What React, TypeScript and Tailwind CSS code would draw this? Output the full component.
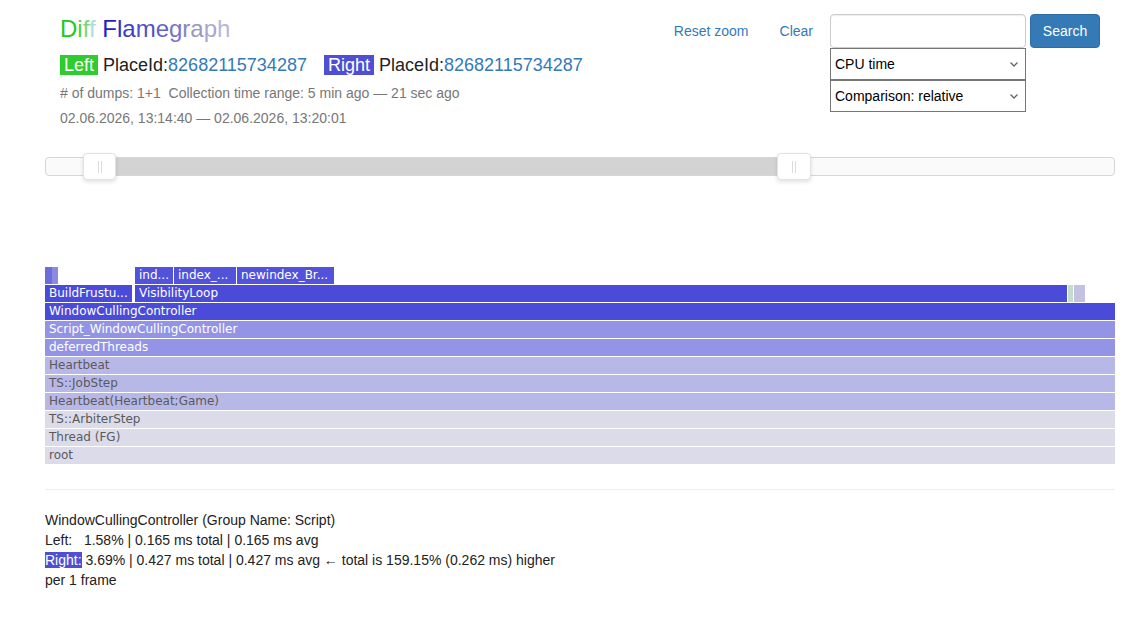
import React from 'react';

type Bar = { x: number; w: number; c: string; label?: string; dark?: boolean };

const BLUE = '#4b4bd9';
const MID = '#9494e6';
const LIGHT = '#b8b8e8';
const PALE = '#dbdbea';

// x positions are page pixels, converted to offsets inside the chart
const rows: Bar[][] = [
  [
    { x: 45, w: 7, c: '#6c6cdc' },
    { x: 52, w: 6, c: '#8a8ae4' },
    { x: 135, w: 38, c: '#5252da', label: 'ind...' },
    { x: 174, w: 62, c: '#5252da', label: 'index_...' },
    { x: 237, w: 97, c: '#5252da', label: 'newindex_Br...' },
  ],
  [
    { x: 45, w: 87, c: BLUE, label: 'BuildFrustu...' },
    { x: 135, w: 932, c: BLUE, label: 'VisibilityLoop' },
    { x: 1068, w: 5, c: '#c5ddc5' },
    { x: 1074, w: 11, c: '#c2c2e0' },
  ],
  [{ x: 45, w: 1070, c: BLUE, label: 'WindowCullingController' }],
  [{ x: 45, w: 1070, c: MID, label: 'Script_WindowCullingController' }],
  [{ x: 45, w: 1070, c: MID, label: 'deferredThreads' }],
  [{ x: 45, w: 1070, c: LIGHT, label: 'Heartbeat', dark: true }],
  [{ x: 45, w: 1070, c: LIGHT, label: 'TS::JobStep', dark: true }],
  [{ x: 45, w: 1070, c: LIGHT, label: 'Heartbeat(Heartbeat;Game)', dark: true }],
  [{ x: 45, w: 1070, c: PALE, label: 'TS::ArbiterStep', dark: true }],
  [{ x: 45, w: 1070, c: PALE, label: 'Thread (FG)', dark: true }],
  [{ x: 45, w: 1070, c: PALE, label: 'root', dark: true }],
];

const titleLetters: [string, string][] = [
  ['D', '#22c922'],
  ['i', '#45d245'],
  ['f', '#7ad77a'],
  ['f', '#a9e0d8'],
  [' ', '#fff'],
  ['F', '#1f1fc9'],
  ['l', '#2e2ec9'],
  ['a', '#3d3dc9'],
  ['m', '#5050c8'],
  ['e', '#6262c8'],
  ['g', '#7474c8'],
  ['r', '#8585c8'],
  ['a', '#9797ca'],
  ['p', '#a7a7cf'],
  ['h', '#b7b7d6'],
];

const Chevron = () => (
  <svg width="10" height="10" viewBox="0 0 10 10" className="text-[#666]">
    <path d="M1.5 3.5 L5 7 L8.5 3.5" fill="none" stroke="currentColor" strokeWidth="1.3" />
  </svg>
);

const SelectBox = ({ label }: { label: string }) => (
  <div className="flex h-[32px] items-center justify-between border border-[#767676] bg-white pl-[4px] pr-[6px] text-[14px] text-black">
    <span>{label}</span>
    <Chevron />
  </div>
);

const Handle = ({ left, width }: { left: number; width: number }) => (
  <div
    className="absolute top-0 flex h-[27px] items-center justify-center gap-[2px] rounded-[4px] border border-[#e2e2e2] bg-white shadow-[0_2px_4px_rgba(0,0,0,0.12)]"
    style={{ left, width }}
  >
    <div className="h-[12px] w-px bg-[#dcdcdc]" />
    <div className="h-[12px] w-px bg-[#dcdcdc]" />
  </div>
);

const FlameRow = ({ bars }: { bars: Bar[] }) => (
  <div className="relative h-[18px]">
    {bars.map((b, i) => (
      <div
        key={i}
        className="absolute top-0 h-[17px] overflow-hidden whitespace-nowrap pl-[4px] text-[12px] leading-[17px]"
        style={{
          left: b.x - 45,
          width: b.w,
          backgroundColor: b.c,
          color: b.dark ? '#5a5a5a' : '#ffffff',
          fontFamily: '"DejaVu Sans", Verdana, sans-serif',
        }}
      >
        {b.label}
      </div>
    ))}
  </div>
);

export default function App() {
  return (
    <div
      className="min-h-[622px] bg-white pl-[45px] pt-[14px] text-[#333]"
      style={{ fontFamily: '"Liberation Sans", Arial, sans-serif' }}
    >
      <div className="w-[1070px]">
        {/* header */}
        <div className="flex items-start justify-between px-[15px]">
          <div>
            <div className="mt-[2px] text-[24px] leading-[26px]">
              {titleLetters.map(([ch, col], i) => (
                <span key={i} style={{ color: col }}>
                  {ch}
                </span>
              ))}
            </div>
            <div className="mt-[13px] whitespace-nowrap text-[18px] leading-[20px]">
              <span className="bg-[#2ecc2e] px-[4px] text-white">Left</span>{' '}
              <span className="text-[#222]">PlaceId:</span>
              <span className="text-[#337ab7]">82682115734287</span>
              <span className="ml-[17px] bg-[#4f4fd4] px-[4px] text-white">Right</span>{' '}
              <span className="text-[#222]">PlaceId:</span>
              <span className="text-[#337ab7]">82682115734287</span>
            </div>
            <div className="mt-[8px] text-[14px] leading-[20px] text-[#777]">
              # of dumps: 1+1&nbsp;&nbsp;Collection time range: 5 min ago — 21 sec ago
            </div>
            <div className="mt-[5px] text-[14px] leading-[20px] text-[#777]">
              02.06.2026, 13:14:40 — 02.06.2026, 13:20:01
            </div>
          </div>

          <div className="flex items-start">
            <div className="flex h-[34px] items-center gap-[31px] pr-[17px] text-[14px] text-[#337ab7]">
              <span>Reset zoom</span>
              <span>Clear</span>
            </div>
            <div className="flex w-[196px] flex-col">
              <div className="h-[34px] rounded-[4px] border border-[#cccccc] bg-white shadow-[inset_0_1px_1px_rgba(0,0,0,0.075)]" />
              <SelectBox label="CPU time" />
              <SelectBox label="Comparison: relative" />
            </div>
            <button className="ml-[4px] h-[34px] w-[70px] rounded-[4px] border border-[#2e6da4] bg-[#337ab7] text-[14px] text-white">
              Search
            </button>
          </div>
        </div>

        {/* range slider */}
        <div className="relative mt-[25px] h-[27px]">
          <div className="absolute left-0 right-0 top-[4px] flex h-[19px] overflow-hidden rounded-[4px] border border-[#d6d6d6] bg-[#fafafa]">
            <div className="w-[54px]" />
            <div className="w-[695px] bg-[#d3d3d3]" />
          </div>
          <Handle left={38} width={33} />
          <Handle left={732} width={34} />
        </div>

        {/* flamegraph */}
        <div className="mt-[87px]">
          {rows.map((r, i) => (
            <FlameRow key={i} bars={r} />
          ))}
        </div>

        <div className="mt-[24px] border-t border-[#eeeeee]" />

        {/* details */}
        <div className="mt-[20px] text-[14px] leading-[20px] text-[#222]">
          <div>WindowCullingController (Group Name: Script)</div>
          <div className="whitespace-pre">Left:   1.58% | 0.165 ms total | 0.165 ms avg</div>
          <div>
            <span className="bg-[#4f4fd4] text-white">Right:</span> 3.69% | 0.427 ms total | 0.427 ms avg ← total is
            159.15% (0.262 ms) higher
          </div>
          <div>per 1 frame</div>
        </div>
      </div>
    </div>
  );
}
